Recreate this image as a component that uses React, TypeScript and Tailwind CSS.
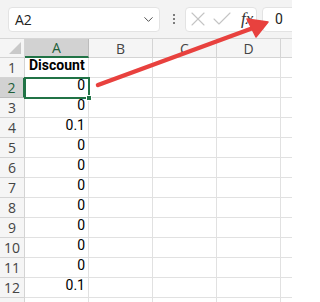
import { ChevronDown, X, Check } from "lucide-react";

const values = ["0", "0", "0.1", "0", "0", "0", "0", "0", "0", "0", "0.1", ""];
const cols = ["A", "B", "C", "D", "E"];

const Arrow = () => (
  <svg className="absolute left-0 top-0 pointer-events-none" width="292" height="302">
    <line x1="98" y1="85" x2="253" y2="28" stroke="#e8413e" strokeWidth="4.5" strokeLinecap="round" />
    <polygon points="268,22 256,37 247,19" fill="#e8413e" stroke="#e8413e" strokeWidth="1.5" strokeLinejoin="round" />
  </svg>
);

export default function App() {
  return (
    <div className="relative w-[292px] h-[302px] overflow-hidden bg-white font-['Roboto',sans-serif]">
      {/* formula bar */}
      <div className="flex items-center h-[39px] bg-[#f3f3f3] border-b border-[#d6d6d6] pl-[8px] overflow-hidden">
        <div className="shrink-0 flex items-center w-[152px] h-[25px] bg-white border border-[#e3e3e3] rounded-[4px] pl-[6px] pr-[3px]">
          <span className="flex-1 text-[14px] text-[#222] font-['Open_Sans',sans-serif]">A2</span>
          <ChevronDown size={15} strokeWidth={1.5} className="text-[#444]" />
        </div>
        <div className="shrink-0 flex flex-col gap-[2px] ml-[13px] mr-[10px]">
          <span className="w-[2px] h-[2px] bg-[#555] rounded-full" />
          <span className="w-[2px] h-[2px] bg-[#555] rounded-full" />
          <span className="w-[2px] h-[2px] bg-[#555] rounded-full" />
        </div>
        <div className="shrink-0 flex items-center w-[72px] h-[25px] bg-white border border-[#e3e3e3] rounded-[4px]">
          <X size={24} strokeWidth={1.1} className="text-[#c4c4c4]" />
          <Check size={24} strokeWidth={1.1} className="text-[#c4c4c4]" />
          <span className="ml-[7px] text-[17px] italic text-[#333] font-['Liberation_Serif',serif]">fx</span>
        </div>
        <div className="shrink-0 ml-[5px] flex items-center w-[40px] h-[25px] bg-white border border-[#e3e3e3] rounded-l-[4px] pl-[12px]">
          <span className="text-[14px] text-[#222]">0</span>
        </div>
      </div>

      {/* column headers */}
      <div className="flex h-[19px] bg-[#f5f5f5] text-[14px] text-[#444] font-['Open_Sans',sans-serif]">
        <div className="relative w-[25px] shrink-0 border-r border-b border-[#d4d4d4]">
          <div className="absolute right-[3px] bottom-[3px] w-0 h-0 border-l-[12px] border-l-transparent border-b-[12px] border-b-[#c9c9c9]" />
        </div>
        {cols.map((c, i) => (
          <div
            key={c}
            className={
              i === 0
                ? "w-[64px] shrink-0 flex items-center justify-center bg-[#d2d2d2] text-[#1f5f3a] border-r border-[#bcbcbc] border-b-2 border-b-[#217346]"
                : "w-[64px] shrink-0 flex items-center justify-center border-r border-b border-[#d4d4d4]"
            }
          >
            {i < 4 ? c : ""}
          </div>
        ))}
      </div>

      {/* rows */}
      {["Discount", ...values].map((v, r) => {
        const sel = r === 1;
        return (
          <div key={r} className="flex h-[20px]">
            <div
              className={
                sel
                  ? "w-[25px] shrink-0 flex items-center justify-center bg-[#d2d2d2] text-[#1f5f3a] border-r-2 border-r-[#217346] border-b border-[#bcbcbc] text-[14px] font-['Open_Sans',sans-serif]"
                  : "w-[25px] shrink-0 flex items-center justify-center bg-[#f5f5f5] text-[#444] border-r border-b border-[#d4d4d4] text-[14px] font-['Open_Sans',sans-serif]"
              }
            >
              {r < 12 ? r + 1 : ""}
            </div>
            <div
              className={
                r === 0
                  ? "w-[64px] shrink-0 flex items-end pl-[4px] pb-[1px] text-[14px] font-bold text-black border-r border-b border-[#e1e1e1]"
                  : "w-[64px] shrink-0 flex items-end justify-end pr-[3px] pb-[1px] text-[14px] text-black border-r border-b border-[#e1e1e1]"
              }
            >
              {v}
            </div>
            {cols.slice(1).map((c) => (
              <div key={c} className="w-[64px] shrink-0 border-r border-b border-[#e1e1e1]" />
            ))}
          </div>
        );
      })}

      {/* selection box on A2 */}
      <div className="absolute left-[24px] top-[77px] w-[66px] h-[22px] border-2 border-[#217346] pointer-events-none">
        <div className="absolute -right-[4px] -bottom-[4px] w-[6px] h-[6px] bg-[#217346] border border-white" />
      </div>

      <Arrow />
    </div>
  );
}
